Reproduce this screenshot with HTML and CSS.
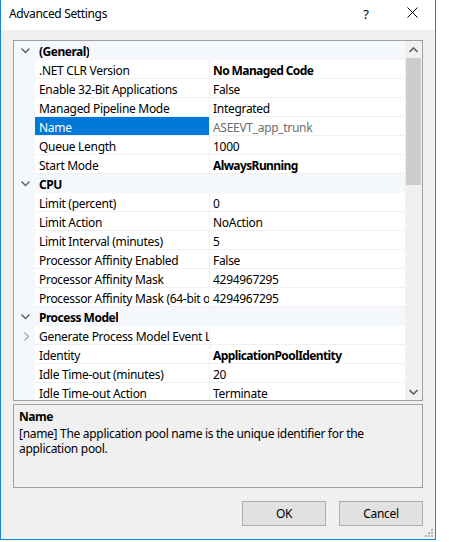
FILE: index.html
```html
<!DOCTYPE html>
<html>
<head>
<meta charset="utf-8">
<link rel="stylesheet" href="styles.css">
</head>
<body>
<div class="window">
  <div class="titlebar">
    <span class="title">Advanced Settings</span>
    <span class="help">?</span>
    <span class="close"><svg width="11" height="11" viewBox="0 0 11 11"><path d="M0.5 0.5 L10.5 10.5 M10.5 0.5 L0.5 10.5" stroke="#000" stroke-width="1" fill="none"/></svg></span>
  </div>
  <div class="body">
    <div class="grid">
      <div class="rows">
        <div class="row cat"><span class="gutter"><svg class="chev" width="9" height="6" viewBox="0 0 9 6"><path d="M0.5 0.5 L4.5 4.5 L8.5 0.5" stroke="#606060" stroke-width="1.4" fill="none"/></svg></span><span class="catname">(General)</span></div>
        <div class="row"><span class="gutter"></span><span class="name">.NET CLR Version</span><span class="value bold">No Managed Code</span></div>
        <div class="row"><span class="gutter"></span><span class="name">Enable 32-Bit Applications</span><span class="value">False</span></div>
        <div class="row"><span class="gutter"></span><span class="name">Managed Pipeline Mode</span><span class="value">Integrated</span></div>
        <div class="row"><span class="gutter"></span><span class="name selected">Name</span><span class="value readonly">ASEEVT_app_trunk</span></div>
        <div class="row"><span class="gutter"></span><span class="name">Queue Length</span><span class="value">1000</span></div>
        <div class="row"><span class="gutter"></span><span class="name">Start Mode</span><span class="value bold">AlwaysRunning</span></div>
        <div class="row cat"><span class="gutter"><svg class="chev" width="9" height="6" viewBox="0 0 9 6"><path d="M0.5 0.5 L4.5 4.5 L8.5 0.5" stroke="#606060" stroke-width="1.4" fill="none"/></svg></span><span class="catname">CPU</span></div>
        <div class="row"><span class="gutter"></span><span class="name">Limit (percent)</span><span class="value">0</span></div>
        <div class="row"><span class="gutter"></span><span class="name">Limit Action</span><span class="value">NoAction</span></div>
        <div class="row"><span class="gutter"></span><span class="name">Limit Interval (minutes)</span><span class="value">5</span></div>
        <div class="row"><span class="gutter"></span><span class="name">Processor Affinity Enabled</span><span class="value">False</span></div>
        <div class="row"><span class="gutter"></span><span class="name">Processor Affinity Mask</span><span class="value">4294967295</span></div>
        <div class="row"><span class="gutter"></span><span class="name">Processor Affinity Mask (64-bit option)</span><span class="value">4294967295</span></div>
        <div class="row cat"><span class="gutter"><svg class="chev" width="9" height="6" viewBox="0 0 9 6"><path d="M0.5 0.5 L4.5 4.5 L8.5 0.5" stroke="#606060" stroke-width="1.4" fill="none"/></svg></span><span class="catname">Process Model</span></div>
        <div class="row"><span class="gutter"><svg class="sub" width="6" height="9" viewBox="0 0 6 9"><path d="M0.5 0.5 L4.5 4.5 L0.5 8.5" stroke="#a8a8a8" stroke-width="1.4" fill="none"/></svg></span><span class="name">Generate Process Model Event Log Entry</span><span class="value"></span></div>
        <div class="row"><span class="gutter"></span><span class="name">Identity</span><span class="value bold">ApplicationPoolIdentity</span></div>
        <div class="row"><span class="gutter"></span><span class="name">Idle Time-out (minutes)</span><span class="value">20</span></div>
        <div class="row"><span class="gutter"></span><span class="name">Idle Time-out Action</span><span class="value">Terminate</span></div>
      </div>
      <div class="scrollbar">
        <div class="sarrow"><svg width="9" height="6" viewBox="0 0 9 6"><path d="M0.5 5 L4.5 1 L8.5 5" stroke="#606060" stroke-width="1.6" fill="none"/></svg></div>
        <div class="thumb"></div>
        <div class="track"></div>
        <div class="sarrow"><svg width="9" height="6" viewBox="0 0 9 6"><path d="M0.5 1 L4.5 5 L8.5 1" stroke="#606060" stroke-width="1.6" fill="none"/></svg></div>
      </div>
    </div>
    <div class="desc">
      <div class="desc-title">Name</div>
      <div class="desc-text">[name] The application pool name is the unique identifier for the application pool.</div>
    </div>
    <div class="buttons">
      <button class="btn">OK</button>
      <button class="btn">Cancel</button>
    </div>
    <div class="grip">
      <svg width="8" height="8" viewBox="0 0 8 8"><g fill="#b8b8b8"><rect x="6" y="0" width="2" height="2"/><rect x="3" y="3" width="2" height="2"/><rect x="6" y="3" width="2" height="2"/><rect x="0" y="6" width="2" height="2"/><rect x="3" y="6" width="2" height="2"/><rect x="6" y="6" width="2" height="2"/></g></svg>
    </div>
  </div>
</div>
</body>
</html>
```

FILE: styles.css
```css
* { box-sizing: border-box; }
html, body { margin: 0; padding: 0; background: #ffffff; }
body {
  font-family: "Noto Sans", "Open Sans", sans-serif;
  font-size: 12px;
  letter-spacing: -0.3px;
  color: #000;
  width: 449px;
  height: 542px;
  overflow: hidden;
}
.window {
  width: 436px;
  height: 540px;
  border: 1px solid #1883d7;
  border-top: none;
  display: flex;
  flex-direction: column;
  background: #f0f0f0;
}
.titlebar {
  height: 30px;
  background: #fff;
  display: flex;
  align-items: center;
  padding-left: 8px;
  flex: none;
}
.title { flex: 1; font-size: 12px; line-height: 16px; padding-bottom: 2px; letter-spacing: -0.35px; }
.help { width: 46px; text-align: center; font-size: 13px; padding-bottom: 3px; }
.close { width: 46px; display: flex; justify-content: center; padding-bottom: 5px; }
.body {
  flex: 1;
  padding: 10px 12px 0 12px;
  display: flex;
  flex-direction: column;
  position: relative;
}
.grid {
  height: 361px;
  border: 1px solid #a0a0a0;
  display: flex;
  background: #fff;
  flex: none;
}
.rows {
  flex: 1;
  overflow: hidden;
  display: flex;
  flex-direction: column;
}
.row {
  height: 19px;
  flex: none;
  display: flex;
  line-height: 21px;
  white-space: nowrap;
}
.gutter {
  width: 21px;
  flex: none;
  background: #f4f7fc;
  display: flex;
  align-items: center;
  justify-content: center;
  padding-left: 2px;
  padding-top: 1px;
}
.row.cat { background: #f4f7fc; }
.catname { font-weight: bold; padding-left: 4px; letter-spacing: -0.5px; overflow: hidden; height: 19px; }
.name {
  width: 175px;
  flex: none;
  overflow: hidden;
  padding-left: 4px;
  border-right: 1px solid #f0f0f0;
  border-bottom: 1px solid #f0f0f0;
  height: 19px;
}
.name.selected { background: #0078d7; color: #fff; }
.value {
  flex: 1;
  padding-left: 3px;
  border-bottom: 1px solid #f0f0f0;
  height: 19px;
  overflow: hidden;
}
.bold { font-weight: bold; letter-spacing: -0.6px; }
.readonly { color: #6d6d6d; }
.sub { margin-left: 2px; }
.scrollbar {
  width: 17px;
  flex: none;
  background: #f0f0f0;
  display: flex;
  flex-direction: column;
}
.sarrow {
  height: 17px;
  flex: none;
  display: flex;
  align-items: center;
  justify-content: center;
}
.thumb {
  height: 127px;
  flex: none;
  margin: 0 1px;
  background: #cdcdcd;
}
.track { flex: 1; }
.desc {
  margin-top: 3px;
  height: 84px;
  border: 1px solid #a0a0a0;
  padding: 3px 5px 0 5px;
  flex: none;
}
.desc-title { font-weight: bold; line-height: 17px; letter-spacing: -0.5px; }
.desc-text { line-height: 15px; margin-top: 1px; }
.buttons {
  margin-top: 13px;
  display: flex;
  justify-content: flex-end;
  gap: 13px;
  flex: none;
}
.btn {
  width: 84px;
  height: 25px;
  background: #e1e1e1;
  border: 1px solid #adadad;
  font-family: "Noto Sans", "Open Sans", sans-serif;
  font-size: 12px;
  letter-spacing: -0.3px;
  color: #000;
  padding: 0;
  margin: 0;
}
.grip {
  position: absolute;
  right: 2px;
  bottom: 2px;
  width: 8px;
  height: 8px;
  display: flex;
}
```
